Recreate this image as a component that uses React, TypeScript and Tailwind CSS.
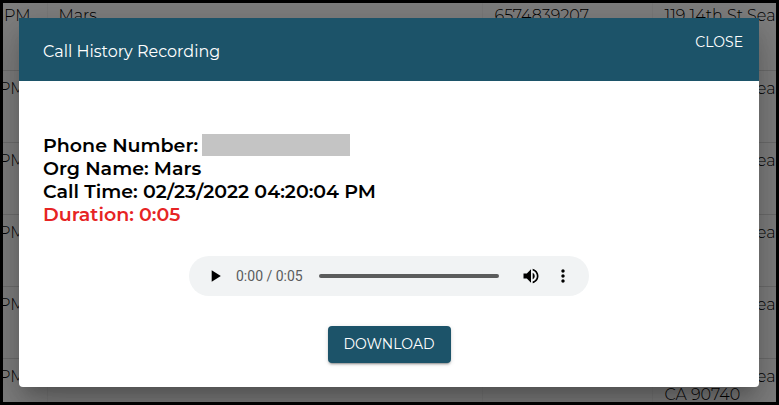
import React from 'react';
import { MdMoreVert, MdPlayArrow, MdVolumeUp } from 'react-icons/md';

const calls = [
  { id: 1, time: 'PM', org: 'Mars', phone: '6574839207', address: '119 14th St Sea', city: '' },
  { id: 2, time: 'PM', org: '', phone: '', address: '119 14th St Sea', city: '' },
  { id: 3, time: 'PM', org: '', phone: '', address: '119 14th St Sea', city: '' },
  { id: 4, time: 'PM', org: '', phone: '', address: '119 14th St Sea', city: '' },
  { id: 5, time: 'PM', org: '', phone: '', address: '119 14th St Sea', city: '' },
  { id: 6, time: 'PM', org: '', phone: '', address: '119 14th St Sea', city: 'CA 90740' },
];

const CallTable = () => (
  <table className="-mt-[5px] w-full table-fixed border-collapse text-base leading-[18px] font-light text-black">
    <colgroup>
      <col className="w-11" />
      <col />
      <col className="w-[170px]" />
      <col className="w-[124px]" />
    </colgroup>
    <tbody>
      {calls.map((call, index) => (
        <tr key={call.id} className="h-[72px] border-b border-[#dcdcdc] align-top">
          <td className="border-r border-[#f4f4f4] pt-[9px]">
            <span className={index === 0 ? 'ml-px' : '-ml-1'}>{call.time}</span>
          </td>
          <td className="border-r border-[#f4f4f4] pt-[9px] pl-[11px]">{call.org}</td>
          <td className="border-r border-[#f4f4f4] pt-[9px] pl-3">{call.phone}</td>
          <td className="pt-[9px] pl-3 whitespace-nowrap">
            <p>{call.address}</p>
            {call.city && <p>{call.city}</p>}
          </td>
        </tr>
      ))}
    </tbody>
  </table>
);

const AudioPlayer = () => (
  <div className="mx-auto flex h-10 w-full max-w-[400px] items-center rounded-full bg-[#f1f3f4] px-4 text-black">
    <button type="button" aria-label="Play" className="flex size-5 items-center justify-center">
      <MdPlayArrow className="size-5" />
    </button>
    <span className="ml-[11px] font-['Roboto',sans-serif] text-sm text-[#5a5c5d]">0:00 / 0:05</span>
    <input
      type="range"
      aria-label="Seek"
      min={0}
      max={5}
      defaultValue={0}
      className="mx-4 h-1 min-w-0 flex-1 appearance-none rounded-full bg-[#5b5c5c] [&::-webkit-slider-thumb]:size-0 [&::-webkit-slider-thumb]:appearance-none"
    />
    <button type="button" aria-label="Mute" className="ml-1 flex size-6 items-center justify-center">
      <MdVolumeUp className="size-5" />
    </button>
    <button type="button" aria-label="More options" className="ml-2.5 flex size-5 items-center justify-center">
      <MdMoreVert className="size-5" />
    </button>
  </div>
);

const RecordingDialog = () => (
  <div
    role="dialog"
    aria-labelledby="dialog-title"
    className="overflow-hidden rounded-b bg-white shadow-[0_11px_15px_-7px_rgba(0,0,0,0.2),0_24px_38px_3px_rgba(0,0,0,0.14),0_9px_46px_8px_rgba(0,0,0,0.12)]"
  >
    <header className="flex h-[63px] items-start justify-between bg-[#1c5369] pr-4 pl-6 text-white">
      <h2 id="dialog-title" className="pt-[22px] text-base leading-6">
        Call History Recording
      </h2>
      <button type="button" className="pt-3 text-sm leading-6">
        CLOSE
      </button>
    </header>
    <div className="px-6 pt-[53px] pb-6">
      <div className="text-[19px] leading-[23px] font-semibold text-black">
        <p className="flex items-start gap-1">
          Phone Number: <span className="h-[22px] w-[148px] bg-[#c4c4c4]" />
        </p>
        <p>Org Name: Mars</p>
        <p>Call Time: 02/23/2022 04:20:04 PM</p>
        <p className="text-[#e62424]">Duration: 0:05</p>
      </div>
      <div className="mt-[30px]">
        <AudioPlayer />
      </div>
      <div className="mt-[30px] flex justify-center">
        <button
          type="button"
          className="rounded bg-[#1c5369] px-4 py-1.5 text-sm leading-[25px] text-white shadow-[0_3px_1px_-2px_rgba(0,0,0,0.2),0_2px_2px_0_rgba(0,0,0,0.14),0_1px_5px_0_rgba(0,0,0,0.12)]"
        >
          DOWNLOAD
        </button>
      </div>
    </div>
  </div>
);

const App = () => {
  return (
    <div className="relative h-screen overflow-hidden border-[3px] border-black bg-white font-['Montserrat','Inter',sans-serif]">
      <CallTable />
      <div className="absolute inset-0 overflow-hidden bg-black/50 pt-[15px] pr-[17px] pl-4">
        <RecordingDialog />
      </div>
    </div>
  );
};

export default App;
